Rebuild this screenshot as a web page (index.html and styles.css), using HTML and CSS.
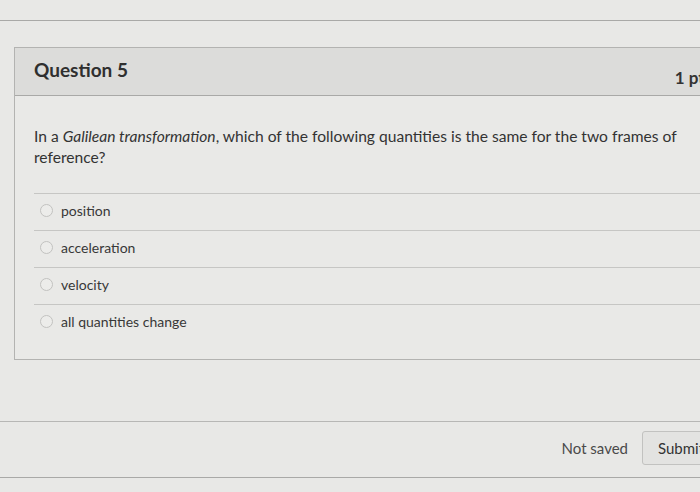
FILE: index.html
```html
<!DOCTYPE html>
<html lang="en">

<head>
    <meta charset="UTF-8">
    <meta name="viewport" content="width=device-width, initial-scale=1.0">
    <title>Quiz</title>
    <link rel="stylesheet" href="styles.css">
</head>

<body>
    <div class="topbar"></div>
    <div class="question">
        <div class="header">
            <h2>Question 5</h2>
            <span class="points">1 pts</span>
        </div>
        <div class="content">
            <p class="text">In a <i>Galilean transformation</i>, which of the following quantities is the same for the two frames of reference?</p>
            <div class="answers">
                <label class="answer"><span class="radio"></span>position</label>
                <label class="answer"><span class="radio"></span>acceleration</label>
                <label class="answer"><span class="radio"></span>velocity</label>
                <label class="answer"><span class="radio"></span>all quantities change</label>
            </div>
        </div>
    </div>
    <div class="footer">
        <span class="status">Not saved</span>
        <button class="submit">Submit Quiz</button>
    </div>
</body>

</html>
```

FILE: styles.css
```css
* {
    margin: 0;
    padding: 0;
    box-sizing: border-box;
    font-family: Lato, "Open Sans", sans-serif;
}

body {
    width: 700px;
    height: 492px;
    overflow: hidden;
    background: #e8e8e6;
    color: #3a3a3a;
}

.topbar {
    height: 21px;
    border-bottom: 1px solid #a9a9a7;
}

.question {
    width: 720px;
    margin: 26px 0 0 14px;
    border: 1px solid #b3b3b1;
    background: #e9e9e7;
}

.question .header {
    display: flex;
    align-items: center;
    justify-content: space-between;
    height: 48px;
    padding: 0 21px 0 19px;
    background: #dcdcda;
    border-bottom: 1px solid #a9a9a7;
}

.header h2 {
    font-size: 19px;
    font-weight: 700;
    color: #2f2f2f;
    margin-top: -4px;
}

.header .points {
    font-size: 17px;
    font-weight: 700;
    color: #333;
    margin-top: 12px;
}

.question .content {
    padding: 30px 0 18px 19px;
}

.content .text {
    width: 680px;
    font-size: 15.6px;
    line-height: 21px;
    color: #333;
}

.answers {
    margin-top: 25px;
}

.answer {
    display: flex;
    align-items: center;
    height: 37px;
    padding: 0 0 3px 6px;
    border-top: 1px solid #c6c6c4;
    font-size: 14px;
    color: #383838;
}

.answer .radio {
    width: 13px;
    height: 13px;
    margin-right: 8px;
    border: 1px solid #c2c2c0;
    border-radius: 50%;
    background: #ececea;
}

.footer {
    display: flex;
    align-items: center;
    justify-content: flex-end;
    height: 57px;
    margin-top: 61px;
    border-top: 1px solid #b7b7b5;
    border-bottom: 1px solid #a9a9a7;
    overflow: hidden;
}

.footer .status {
    font-size: 15px;
    color: #4a4a4a;
    margin-right: 14px;
    margin-bottom: 4px;
}

.footer .submit {
    flex-shrink: 0;
    width: 120px;
    height: 34px;
    margin: 0 -62px 4px 0;
    padding: 0 0 0 15px;
    text-align: left;
    border: 1px solid #c2c2c0;
    background: #e3e3e1;
    font-size: 15px;
    color: #333;
    border-radius: 3px;
}
```
